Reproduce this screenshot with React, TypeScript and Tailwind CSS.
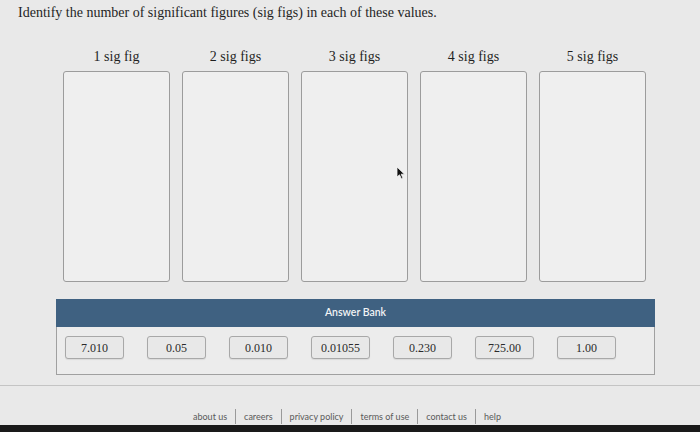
import React from "react";

const headers = ["1 sig fig", "2 sig figs", "3 sig figs", "4 sig figs", "5 sig figs"];
const answers = ["7.010", "0.05", "0.010", "0.01055", "0.230", "725.00", "1.00"];
const links = ["about us", "careers", "privacy policy", "terms of use", "contact us", "help"];

export default function App() {
  return (
    <div className="relative w-[700px] h-[432px] overflow-hidden bg-[#e9e9e9] text-[#222]" style={{ fontFamily: '"Liberation Serif", serif' }}>
      <div className="h-[26px] pl-[18px] pt-[3px] text-[14px] leading-[20px] text-[#1f1f1f]">
        Identify the number of significant figures (sig figs) in each of these values.
      </div>

      <div className="mt-[21px] flex gap-[12px] pl-[63px]">
        {headers.map((h) => (
          <div key={h} className="flex w-[107px] flex-col items-center">
            <div className="h-[20px] text-[14px] leading-[20px] text-[#1f1f1f]">{h}</div>
            <div className="mt-[4px] h-[211px] w-full rounded-[3px] border border-[#9c9c9c] bg-[#efefef]" />
          </div>
        ))}
      </div>

      <div className="ml-[56px] mt-[17px] w-[599px]">
        <div className="flex h-[28px] items-center justify-center bg-[#3f6181] text-[10.5px] font-semibold text-[#f2f4f6]" style={{ fontFamily: 'Lato, "Open Sans", sans-serif' }}>
          Answer Bank
        </div>
        <div className="flex h-[48px] gap-[23px] border border-t-0 border-[#a0a0a0] bg-[#ececec] pl-[8px] pt-[9px]">
          {answers.map((a) => (
            <div key={a} className="flex h-[23px] w-[59px] items-center justify-center rounded-[3px] border border-[#a8a8a8] bg-[#e8e8e8] text-[12px] text-[#2a2a2a] shadow-[0_1px_1px_rgba(0,0,0,0.08)]">
              {a}
            </div>
          ))}
        </div>
      </div>

      <div className="mt-[10px] h-[1px] w-full bg-[#c4c4c4]" />

      <div className="flex h-[39px] items-center pl-[185px] pt-[22px] text-[9px] text-[#5a5a5a]" style={{ fontFamily: 'Lato, "Open Sans", sans-serif' }}>
        {links.map((l, i) => (
          <div key={l} className={`flex h-[15px] items-center px-[8px] ${i < links.length - 1 ? "border-r border-[#9a9a9a]" : ""}`}>
            {l}
          </div>
        ))}
      </div>

      <div className="h-[8px] w-full bg-[#1a1a1a]" />

      <svg className="absolute left-[396px] top-[166px]" width="10" height="14" viewBox="0 0 10 14">
        <path d="M1 1 L1 11 L3.5 8.8 L5.5 13 L7 12.3 L5.2 8.2 L8.5 8.2 Z" fill="#111" stroke="#f5f5f5" strokeWidth="0.8" />
      </svg>
    </div>
  );
}
